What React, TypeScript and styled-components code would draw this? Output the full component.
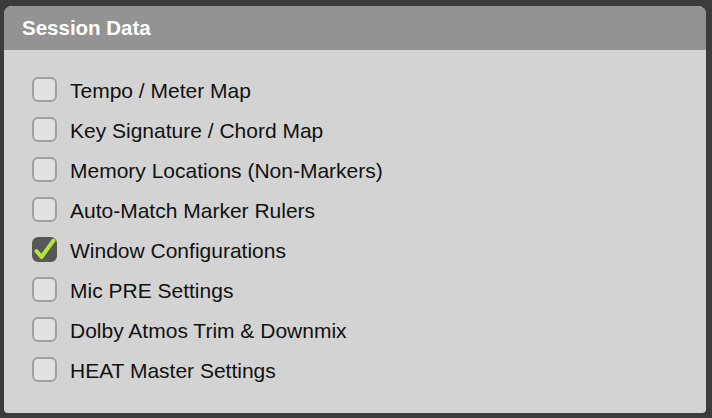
import styled, { createGlobalStyle } from "styled-components";

const GlobalStyle = createGlobalStyle`
  html, body {
    margin: 0;
    padding: 0;
    background: #3c3c3c;
  }
`;

const Page = styled.div`
  width: 712px;
  height: 418px;
  box-sizing: border-box;
  padding: 6px 6px 5px 4px;
`;

const Panel = styled.section`
  height: 100%;
  display: flex;
  flex-direction: column;
  background: #d3d3d3;
  border-radius: 8px 8px 4px 4px;
  overflow: hidden;
  font-family: "Liberation Sans", Arial, sans-serif;
`;

const Header = styled.header`
  height: 44px;
  flex: none;
  display: flex;
  align-items: center;
  padding-left: 18px;
  background: #939393;
  color: #ffffff;
  font-size: 20.5px;
  font-weight: bold;
`;

const List = styled.ul`
  list-style: none;
  margin: 0;
  padding: 21px 0 0 28px;
`;

const Row = styled.li`
  height: 40px;
  display: flex;
  align-items: center;
  gap: 13px;
  font-size: 21px;
  color: #111111;
`;

const Box = styled.span<{ $checked: boolean }>`
  position: relative;
  width: 25px;
  height: 25px;
  box-sizing: border-box;
  flex: none;
  border-radius: 6px;
  border: 2px solid ${(p) => (p.$checked ? "#585858" : "#a0a0a0")};
  background: ${(p) => (p.$checked ? "#575757" : "#e1e1e1")};
  margin-top: -3px;

  svg {
    position: absolute;
    left: -2px;
    top: -2px;
    overflow: visible;
  }
`;

const items = [
  { label: "Tempo / Meter Map", checked: false },
  { label: "Key Signature / Chord Map", checked: false },
  { label: "Memory Locations (Non-Markers)", checked: false },
  { label: "Auto-Match Marker Rulers", checked: false },
  { label: "Window Configurations", checked: true },
  { label: "Mic PRE Settings", checked: false },
  { label: "Dolby Atmos Trim & Downmix", checked: false },
  { label: "HEAT Master Settings", checked: false },
];

// lime tick that runs a little past the box edge
function Check() {
  return (
    <svg width="25" height="25" viewBox="0 0 25 25">
      <path
        d="M4.5 14 L9.5 20 L21.5 3.5"
        fill="none"
        stroke="#b4e43a"
        strokeWidth="4"
        strokeLinecap="round"
        strokeLinejoin="round"
      />
    </svg>
  );
}

export default function App() {
  return (
    <>
      <GlobalStyle />
      <Page>
        <Panel>
          <Header>Session Data</Header>
          <List>
            {items.map((item) => (
              <Row key={item.label}>
                <Box $checked={item.checked}>{item.checked && <Check />}</Box>
                {item.label}
              </Row>
            ))}
          </List>
        </Panel>
      </Page>
    </>
  );
}
